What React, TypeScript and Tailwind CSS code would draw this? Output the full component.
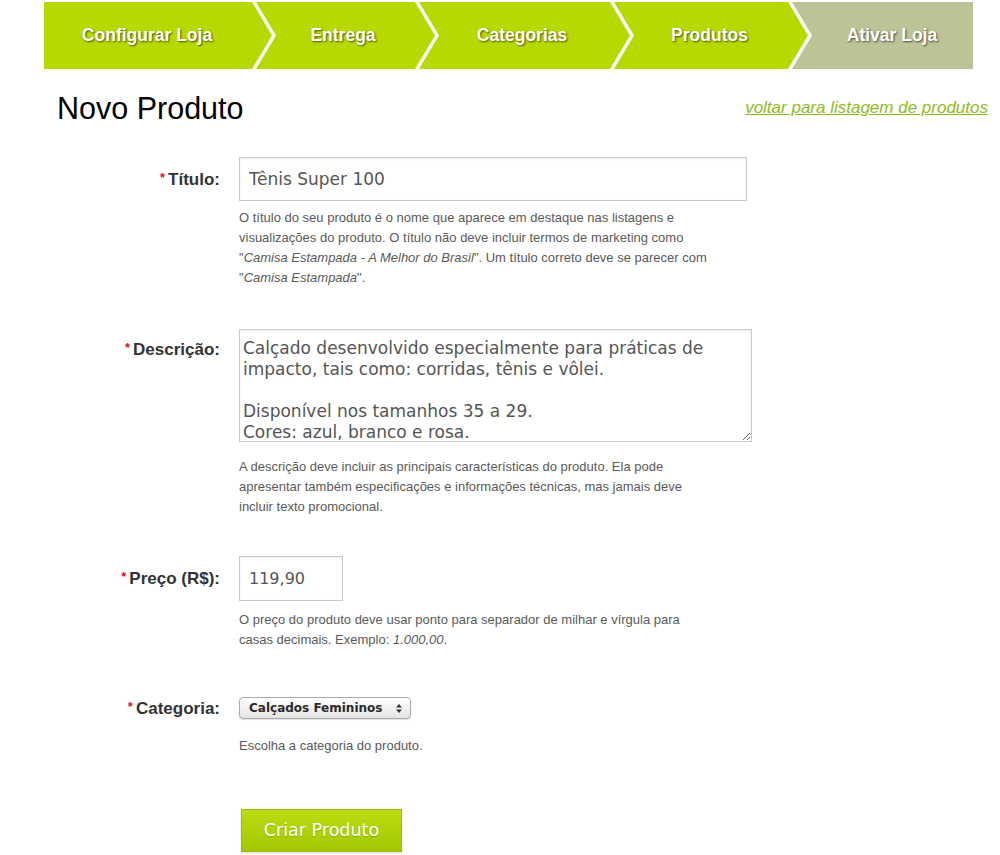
import React from "react";

const steps = [
    { label: "Configurar Loja", width: "w-[228px]", pad: "pr-[22px]", first: true, bg: "bg-[#b6d900]" },
    { label: "Entrega", width: "w-[179px]", pad: "-ml-[16px] pr-[5px]", bg: "bg-[#b6d900]" },
    { label: "Categorias", width: "w-[211px]", pad: "-ml-[16px] pr-[5px]", bg: "bg-[#b6d900]" },
    { label: "Produtos", width: "w-[194px]", pad: "-ml-[16px] pr-[3px]", bg: "bg-[#b6d900]" },
    { label: "Ativar Loja", width: "w-[181px]", pad: "-ml-[16px] pl-[19px]", last: true, bg: "bg-[#bcc397]" },
];

function StepBar() {
    return (
        <nav className="flex h-[67px] ml-[44px]">
            {steps.map((s) => {
                const clip = s.first
                    ? "[clip-path:polygon(0_0,calc(100%-20px)_0,100%_50%,calc(100%-20px)_100%,0_100%)]"
                    : s.last
                    ? "[clip-path:polygon(0_0,100%_0,100%_100%,0_100%,20px_50%)]"
                    : "[clip-path:polygon(0_0,calc(100%-20px)_0,100%_50%,calc(100%-20px)_100%,0_100%,20px_50%)]";
                return (
                    <div
                        key={s.label}
                        className={`${s.width} ${s.bg} ${clip} ${s.pad} flex items-center justify-center text-white font-bold text-[17.5px] [text-shadow:1px_1px_2px_rgba(0,0,0,0.6)]`}
                    >
                        {s.label}
                    </div>
                );
            })}
        </nav>
    );
}

function Req({ children }: { children: React.ReactNode }) {
    return (
        <span className="text-[#333] font-bold text-[17px] leading-[20px]">
            <span className="text-[#d0141a] text-[13px] align-[3px] mr-[3px]">*</span>
            {children}
        </span>
    );
}

function Help({ children }: { children: React.ReactNode }) {
    return <p className="text-[13px] leading-[20px] text-[#5a5a5a]">{children}</p>;
}

const inputFont = "font-['DejaVu_Sans','Lucida_Grande',sans-serif]";

export default function App() {
    const desc =
        "Calçado desenvolvido especialmente para práticas de\nimpacto, tais como: corridas, tênis e vôlei.\n\nDisponível nos tamanhos 35 a 29.\nCores: azul, branco e rosa.";

    return (
        <div className="w-[1000px] h-[855px] overflow-hidden bg-white pt-[2px] font-['Liberation_Sans',Arial,sans-serif]">
            <StepBar />

            <div className="flex items-start justify-between mt-[21px] pl-[57px] pr-[12px]">
                <h1 className="text-[30.5px] leading-[36px] text-black">Novo Produto</h1>
                <a href="#" className="mt-[5px] text-[17px] italic underline text-[#8fbb1c]">
                    voltar para listagem de produtos
                </a>
            </div>

            <form className="mt-[31px]">
                <div className="grid grid-cols-[220px_1fr] gap-x-[19px]">
                    <div className="text-right pt-[11px]">
                        <Req>Título:</Req>
                    </div>
                    <div>
                        <input
                            readOnly
                            defaultValue="Tênis Super 100"
                            className={`${inputFont} w-[508px] h-[44px] border border-[#c9c9c9] px-[9px] text-[17px] text-[#555] shadow-[inset_0_1px_2px_rgba(0,0,0,0.08)] outline-none`}
                        />
                        <div className="mt-[7px]">
                            <Help>
                                O título do seu produto é o nome que aparece em destaque nas listagens e
                                <br />
                                visualizações do produto. O título não deve incluir termos de marketing como
                                <br />
                                "<i>Camisa Estampada - A Melhor do Brasil</i>". Um título correto deve se parecer com
                                <br />
                                "<i>Camisa Estampada</i>".
                            </Help>
                        </div>
                    </div>
                </div>

                <div className="grid grid-cols-[220px_1fr] gap-x-[19px] mt-[41px]">
                    <div className="text-right pt-[9px]">
                        <Req>Descrição:</Req>
                    </div>
                    <div>
                        <textarea
                            readOnly
                            defaultValue={desc}
                            className={`${inputFont} block w-[513px] h-[113px] border border-[#c9c9c9] pl-[3px] pt-[8px] text-[17px] leading-[21px] text-[#555] overflow-hidden resize outline-none shadow-[inset_0_1px_2px_rgba(0,0,0,0.08)]`}
                        />
                        <div className="mt-[15px]">
                            <Help>
                                A descrição deve incluir as principais características do produto. Ela pode
                                <br />
                                apresentar também especificações e informações técnicas, mas jamais deve
                                <br />
                                incluir texto promocional.
                            </Help>
                        </div>
                    </div>
                </div>

                <div className="grid grid-cols-[220px_1fr] gap-x-[19px] mt-[39px]">
                    <div className="text-right pt-[11px]">
                        <Req>Preço (R$):</Req>
                    </div>
                    <div>
                        <input
                            readOnly
                            defaultValue="119,90"
                            className={`${inputFont} w-[104px] h-[45px] border border-[#c9c9c9] px-[9px] text-[16px] text-[#555] shadow-[inset_0_1px_2px_rgba(0,0,0,0.08)] outline-none`}
                        />
                        <div className="mt-[9px]">
                            <Help>
                                O preço do produto deve usar ponto para separador de milhar e vírgula para
                                <br />
                                casas decimais. Exemplo: <i>1.000,00</i>.
                            </Help>
                        </div>
                    </div>
                </div>

                <div className="grid grid-cols-[220px_1fr] gap-x-[19px] mt-[47px]">
                    <div className="text-right">
                        <Req>Categoria:</Req>
                    </div>
                    <div>
                        <div
                            className={`${inputFont} flex items-center justify-between w-[172px] h-[22px] rounded-[4px] border border-[#a9a9a9] bg-gradient-to-b from-white to-[#e4e4e4] pl-[9px] pr-[8px] text-[12px] font-bold text-[#2a2a2a] shadow-[0_1px_1px_rgba(0,0,0,0.12)]`}
                        >
                            <span>Calçados Femininos</span>
                            <svg width="6" height="9" viewBox="0 0 6 9" fill="#333">
                                <path d="M3 0 L6 3.5 H0 Z" />
                                <path d="M0 5.5 H6 L3 9 Z" />
                            </svg>
                        </div>
                        <div className="mt-[17px]">
                            <Help>Escolha a categoria do produto.</Help>
                        </div>
                    </div>
                </div>

                <div className="ml-[241px] mt-[53px]">
                    <button
                        type="button"
                        className={`${inputFont} w-[161px] h-[43px] border border-[#9dbd08] bg-gradient-to-b from-[#bcdc12] to-[#a3c800] text-white text-[17.5px] [text-shadow:0_1px_1px_rgba(0,0,0,0.2)] shadow-[0_1px_2px_rgba(0,0,0,0.15)]`}
                    >
                        Criar Produto
                    </button>
                </div>
            </form>
        </div>
    );
}
